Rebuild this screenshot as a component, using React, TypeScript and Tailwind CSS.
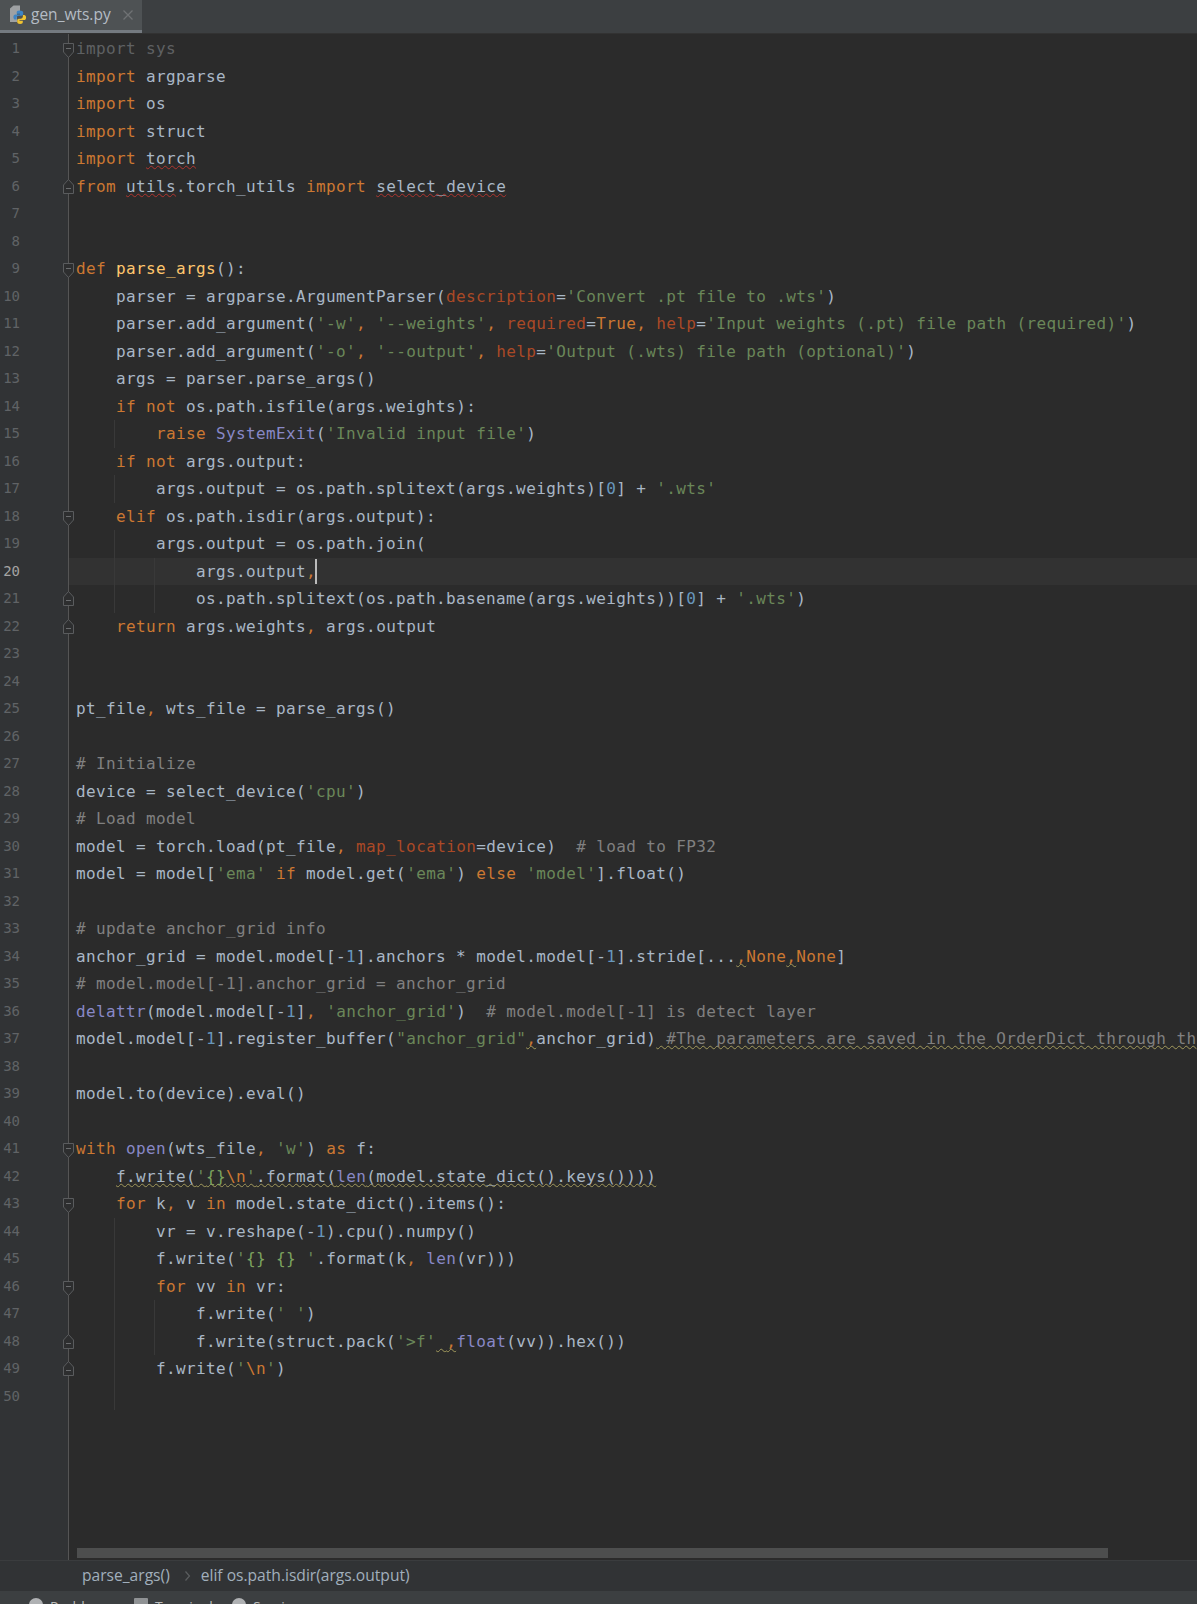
import React from "react";

type Tok = string | [string, string];

const K = "text-[#cc7832]";
const S = "text-[#6a8759]";
const C = "text-[#808080]";
const B = "text-[#8888c6]";
const N = "text-[#6897bb]";
const A = "text-[#aa4926]";
const F = "text-[#ffc66d]";
const G = "text-[#5f6163]";
const H = "text-[#7da35f]";
const R = "underline decoration-wavy decoration-[#b0352f] decoration-1 underline-offset-[1px] [text-decoration-skip-ink:none]";
const W = "underline decoration-wavy decoration-[#a29a5c] decoration-1 underline-offset-[1px] [text-decoration-skip-ink:none]";

const i4 = "    ";
const i8 = "        ";
const i12 = "            ";

const lines: Tok[][] = [
  [[G, "import sys"]],
  [[K, "import"], " argparse"],
  [[K, "import"], " os"],
  [[K, "import"], " struct"],
  [[K, "import"], " ", [R, "torch"]],
  [[K, "from"], " ", [R, "utils"], ".torch_utils ", [K, "import"], " ", [R, "select_device"]],
  [],
  [],
  [[K, "def"], " ", [F, "parse_args"], "():"],
  [i4 + "parser = argparse.ArgumentParser(", [A, "description"], "=", [S, "'Convert .pt file to .wts'"], ")"],
  [i4 + "parser.add_argument(", [S, "'-w'"], ", ", [S, "'--weights'"], ", ", [A, "required"], "=", [K, "True"], ", ", [A, "help"], "=", [S, "'Input weights (.pt) file path (required)'"], ")"],
  [i4 + "parser.add_argument(", [S, "'-o'"], ", ", [S, "'--output'"], ", ", [A, "help"], "=", [S, "'Output (.wts) file path (optional)'"], ")"],
  [i4 + "args = parser.parse_args()"],
  [i4, [K, "if not"], " os.path.isfile(args.weights):"],
  [i8, [K, "raise"], " ", [B, "SystemExit"], "(", [S, "'Invalid input file'"], ")"],
  [i4, [K, "if not"], " args.output:"],
  [i8 + "args.output = os.path.splitext(args.weights)[", [N, "0"], "] + ", [S, "'.wts'"]],
  [i4, [K, "elif"], " os.path.isdir(args.output):"],
  [i8 + "args.output = os.path.join("],
  [i12 + "args.output,"],
  [i12 + "os.path.splitext(os.path.basename(args.weights))[", [N, "0"], "] + ", [S, "'.wts'"], ")"],
  [i4, [K, "return"], " args.weights, args.output"],
  [],
  [],
  ["pt_file, wts_file = parse_args()"],
  [],
  [[C, "# Initialize"]],
  ["device = select_device(", [S, "'cpu'"], ")"],
  [[C, "# Load model"]],
  ["model = torch.load(pt_file, ", [A, "map_location"], "=device)  ", [C, "# load to FP32"]],
  ["model = model[", [S, "'ema'"], " ", [K, "if"], " model.get(", [S, "'ema'"], ") ", [K, "else"], " ", [S, "'model'"], "].float()"],
  [],
  [[C, "# update anchor_grid info"]],
  ["anchor_grid = model.model[-", [N, "1"], "].anchors * model.model[-", [N, "1"], "].stride[...", [W + " " + K, ","], [K, "None"], [W + " " + K, ","], [K, "None"], "]"],
  [[C, "# model.model[-1].anchor_grid = anchor_grid"]],
  [[B, "delattr"], "(model.model[-", [N, "1"], "], ", [S, "'anchor_grid'"], ")  ", [C, "# model.model[-1] is detect layer"]],
  ["model.model[-", [N, "1"], "].register_buffer(", [S, "\"anchor_grid\""], [W + " " + K, ","], "anchor_grid)", [W + " " + C, " #The parameters are saved in the OrderDict through th"]],
  [],
  ["model.to(device).eval()"],
  [],
  [[K, "with"], " ", [B, "open"], "(wts_file, ", [S, "'w'"], ") ", [K, "as"], " f:"],
  [i4, [W, "f.write("], [W + " " + S, "'"], [W + " " + H, "{}"], [W + " " + K, "\\n"], [W + " " + S, "'"], [W, ".format("], [W + " " + B, "len"], [W, "(model.state_dict().keys()))"], [W, ")"]],
  [i4, [K, "for"], " k, v ", [K, "in"], " model.state_dict().items():"],
  [i8 + "vr = v.reshape(-", [N, "1"], ").cpu().numpy()"],
  [i8 + "f.write(", [S, "'"], [H, "{}"], [S, " "], [H, "{}"], [S, " '"], ".format(k, ", [B, "len"], "(vr)))"],
  [i8, [K, "for"], " vv ", [K, "in"], " vr:"],
  [i12 + "f.write(", [S, "' '"], ")"],
  [i12 + "f.write(struct.pack(", [S, "'>f'"], [W, " "], [W + " " + K, ","], [B, "float"], "(vv)).hex())"],
  [i8 + "f.write(", [S, "'"], [K, "\\n"], [S, "'"], ")"],
  [],
];

const foldDown = new Set([1, 9, 18, 41, 43, 46]);
const foldUp = new Set([6, 21, 22, 48, 49]);
const guide1 = new Set([15, 17, 19, 20, 21, 44, 45, 46, 47, 48, 49, 50]);
const guide2 = new Set([20, 21, 47, 48]);

function Plain({ text }: { text: string }) {
  const parts = text.split(/(,)/);
  return (
    <>
      {parts.map((p, i) =>
        p === "," ? (
          <span key={i} className={K}>
            ,
          </span>
        ) : (
          <span key={i}>{p}</span>
        )
      )}
    </>
  );
}

function FoldDown() {
  return (
    <svg width="12" height="16" viewBox="0 0 12 16" className="absolute left-[63px] top-[8px]">
      <path d="M0.5 0.5H10.5V9L5.5 14.5L0.5 9Z" fill="#2d2e2f" stroke="#5a5c5e" />
      <path d="M3 5.5H8" stroke="#6a6c6e" />
    </svg>
  );
}

function FoldUp() {
  return (
    <svg width="12" height="16" viewBox="0 0 12 16" className="absolute left-[63px] top-[6px]">
      <path d="M0.5 14.5H10.5V6L5.5 0.5L0.5 6Z" fill="#2d2e2f" stroke="#5a5c5e" />
      <path d="M3 9.5H8" stroke="#6a6c6e" />
    </svg>
  );
}

function PyIcon() {
  return (
    <svg width="18" height="20" viewBox="0 0 18 20" className="shrink-0">
      <path d="M1 3.5L4.5 0.5H11V8H8V17H1Z" fill="#9ea1a3" />
      <path d="M10.5 5.5c-2.2 0-2.8.8-2.8 2v1.3H11v.6H6.4c-1.2 0-2 .9-2 2.6s.8 2.6 1.9 2.6h1.3v-1.7c0-1.2 1-2.1 2.2-2.1h2.7c1 0 1.7-.8 1.7-1.7V7.500c0-1.200-1.200-2-3.700-2z" fill="#3d85c6" />
      <path d="M11 19c2.200 0 2.800-.8 2.800-2v-1.300H10.500v-.6h4.600c1.200 0 2-.9 2-2.600s-.8-2.600-1.900-2.600h-1.300v1.700c0 1.200-1 2.100-2.200 2.100H9.900c-1 0-1.700.8-1.700 1.700V17c0 1.200 1.200 2 2.800 2z" fill="#f0c330" />
    </svg>
  );
}

export default function App() {
  const ui = "font-['Open_Sans','Noto_Sans',sans-serif]";
  return (
    <div className="flex h-[1604px] w-[1197px] flex-col overflow-hidden bg-[#2b2b2b]">
      {/* Tabs */}
      <div className="flex h-[34px] shrink-0 border-b border-[#323232] bg-[#3c3f41]">
        <div className="flex h-[33px] w-[142px] items-center gap-[4px] border-b-[3px] border-[#747a80] bg-[#4e5254] pl-[9px]">
          <PyIcon />
          <span className={`${ui} text-[15.5px] leading-none text-[#b4bcc4]`}>gen_wts.py</span>
          <svg width="12" height="12" viewBox="0 0 12 12" className="ml-[7px]">
            <path d="M1.500 1.500L10.500 10.500M10.500 1.500L1.500 10.500" stroke="#6f7274" strokeWidth="1.300" />
          </svg>
        </div>
      </div>

      {/* Editor */}
      <div className="flex min-h-0 flex-1 font-['DejaVu_Sans_Mono',monospace]">
        <div className="relative z-10 w-[69px] shrink-0 border-r border-[#555555] bg-[#313335] pt-[1px]">
          {lines.map((_, i) => {
            const n = i + 1;
            return (
              <div key={n} className="relative h-[27.5px] leading-[27.5px]">
                <span className={`block w-[20px] text-right text-[14px] ${n === 20 ? "text-[#a4a3a3]" : "text-[#606366]"}`}>{n}</span>
                {foldDown.has(n) && <FoldDown />}
                {foldUp.has(n) && <FoldUp />}
              </div>
            );
          })}
        </div>

        <div className="flex min-w-0 flex-1 flex-col">
          <div className="min-h-0 flex-1 overflow-hidden pt-[1px]">
            {lines.map((toks, i) => {
              const n = i + 1;
              return (
                <div
                  key={n}
                  className={`relative h-[27.5px] whitespace-pre pl-[7px] text-[16px] leading-[27.5px] tracking-[0.37px] text-[#a9b7c6] ${n === 20 ? "bg-[#323232]" : ""}`}
                >
                  {guide1.has(n) && <span className="absolute left-[45px] top-0 h-full w-px bg-[#393939]" />}
                  {guide2.has(n) && <span className="absolute left-[85px] top-0 h-full w-px bg-[#393939]" />}
                  {toks.map((t, j) =>
                    typeof t === "string" ? (
                      <Plain key={j} text={t} />
                    ) : (
                      <span key={j} className={t[0]}>
                        {t[1]}
                      </span>
                    )
                  )}
                  {n === 20 && <span className="absolute left-[246px] top-[1px] h-[25px] w-[2px] bg-[#bbbbbb]" />}
                </div>
              );
            })}
          </div>
          <div className="mb-[2px] ml-[8px] h-[10px] w-[1031px] shrink-0 bg-[#4d4e4e]" />
        </div>
      </div>

      {/* Breadcrumbs */}
      <div className={`${ui} flex h-[31px] shrink-0 items-center border-t border-[#3a3c3e] bg-[#313335] pl-[82px] text-[15.6px] text-[#a1afbc]`}>
        <span>parse_args()</span>
        <svg width="8" height="12" viewBox="0 0 8 12" className="ml-[14px] mr-[9px]">
          <path d="M1.500 1.500L5.500 6L1.500 10.500" fill="none" stroke="#5b5e60" strokeWidth="1.200" />
        </svg>
        <span>elif os.path.isdir(args.output)</span>
      </div>

      {/* Tool window bar */}
      <div className={`${ui} flex h-[13px] shrink-0 items-start overflow-hidden bg-[#3c3f41] pl-[29px] pt-[7px] text-[14px] leading-[18px] text-[#bbbbbb]`}>
        <span className="h-[14px] w-[14px] shrink-0 rounded-full bg-[#afb1b3]" />
        <span className="ml-[7px] w-[84px]">Problems</span>
        <span className="h-[14px] w-[14px] shrink-0 rounded-[1px] bg-[#8f9294]" />
        <span className="ml-[7px] w-[77px]">Terminal</span>
        <span className="h-[14px] w-[14px] shrink-0 rounded-full bg-[#afb1b3]" />
        <span className="ml-[7px]">Services</span>
      </div>
    </div>
  );
}
